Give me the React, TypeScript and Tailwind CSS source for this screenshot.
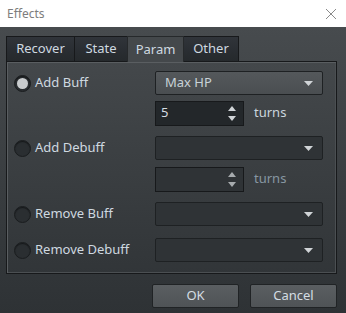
import React from "react";

const font = { fontFamily: '"Noto Sans", "Open Sans", sans-serif' };

function Radio({ checked }: { checked?: boolean }) {
  return (
    <div className="w-[17px] h-[17px] rounded-full border border-[#1a1d1f] bg-[#2a2e31] flex items-center justify-center shrink-0 shadow-[inset_0_1px_1px_rgba(0,0,0,0.5)]">
      {checked && <div className="w-[11px] h-[11px] rounded-full bg-[#c9ccce]" />}
    </div>
  );
}

function Arrow({ color = "#d0d4d7" }: { color?: string }) {
  return (
    <svg width="9" height="5" viewBox="0 0 9 5" className="shrink-0">
      <path d="M0 0 L9 0 L4.5 5 Z" fill={color} />
    </svg>
  );
}

function Combo({ value, active }: { value?: string; active?: boolean }) {
  return (
    <div
      className={
        "w-[168px] h-[24px] rounded-[2px] border flex items-center pl-[9px] pr-[9px] justify-between " +
        (active
          ? "border-[#1e2123] bg-gradient-to-b from-[#54585b] to-[#4a4e51] text-[#c8d2d8]"
          : "border-[#1e2123] bg-[#2f3336]")
      }
    >
      <span className="text-[13px]">{value ?? ""}</span>
      <Arrow />
    </div>
  );
}

function Spin({ value, disabled }: { value?: string; disabled?: boolean }) {
  return (
    <div className="flex items-center">
      <div
        className={
          "w-[89px] h-[25px] border border-[#17191b] flex items-center justify-between pl-[5px] pr-[7px] " +
          (disabled ? "bg-[#2f3336]" : "bg-[#23272a]")
        }
      >
        <span className="text-[13px] text-[#d6dde2]">{value ?? ""}</span>
        <div className="flex flex-col gap-[5px] items-center">
          <svg width="8" height="5" viewBox="0 0 8 5">
            <path d="M0 5 L8 5 L4 0 Z" fill={disabled ? "#a7abae" : "#d0d4d7"} />
          </svg>
          <svg width="8" height="5" viewBox="0 0 8 5">
            <path d="M0 0 L8 0 L4 5 Z" fill={disabled ? "#a7abae" : "#d0d4d7"} />
          </svg>
        </div>
      </div>
      <span className={"ml-[10px] text-[13px] " + (disabled ? "text-[#8797a2]" : "text-[#cbd6dd]")}>turns</span>
    </div>
  );
}

function Row({ label, checked, children }: { label?: string; checked?: boolean; children: React.ReactNode }) {
  return (
    <div className="flex items-center h-[24px]">
      <div className="w-[148px] flex items-center pl-[7px] gap-[4px]">
        {label && (
          <>
            <Radio checked={checked} />
            <span className="text-[13px] text-[#cfd9e0]">{label}</span>
          </>
        )}
      </div>
      {children}
    </div>
  );
}

export default function App() {
  const tabs = ["Recover", "State", "Param", "Other"];
  const widths = ["w-[69px]", "w-[54px]", "w-[57px]", "w-[56px]"];
  return (
    <div className="w-[346px] h-[313px] flex flex-col overflow-hidden" style={font}>
      <div className="h-[27px] bg-white flex items-center justify-between pl-[7px] pr-[9px] shrink-0">
        <span className="text-[12px] text-[#7d7d7d]">Effects</span>
        <svg width="12" height="12" viewBox="0 0 12 12">
          <path d="M1 1 L11 11 M11 1 L1 11" stroke="#8a8a8a" strokeWidth="1" />
        </svg>
      </div>
      <div className="flex-1 bg-gradient-to-b from-[#474b4e] to-[#2e3235] px-[6px] pt-[9px] flex flex-col">
        <div className="flex h-[25px] items-end">
          {tabs.map((t, i) => {
            const active = t === "Param";
            return (
              <div
                key={t}
                className={
                  widths[i] +
                  " h-[25px] flex items-center justify-center text-[13px] border border-b-0 -ml-px first:ml-0 " +
                  (active
                    ? "bg-[#44484b] border-[#26292b] text-[#cfd9e0] relative z-10 h-[26px] -mb-px"
                    : "bg-gradient-to-b from-[#30343a] to-[#25292c] border-[#17191b] text-[#cfd9e0]")
                }
              >
                {t}
              </div>
            );
          })}
        </div>
        <div className="w-[331px] h-[213px] border border-[#17191b] shadow-[inset_1px_1px_0_#5a5e61,inset_-1px_-1px_0_#4b4f52] flex flex-col pt-[9px]">
          <Row label="Add Buff" checked>
            <Combo value="Max HP" active />
          </Row>
          <div className="mt-[6px]">
            <Row>
              <Spin value="5" />
            </Row>
          </div>
          <div className="mt-[11px]">
            <Row label="Add Debuff">
              <Combo />
            </Row>
          </div>
          <div className="mt-[7px]">
            <Row>
              <Spin disabled />
            </Row>
          </div>
          <div className="mt-[11px]">
            <Row label="Remove Buff">
              <Combo />
            </Row>
          </div>
          <div className="mt-[12px]">
            <Row label="Remove Debuff">
              <Combo />
            </Row>
          </div>
        </div>
        <div className="flex justify-end gap-[11px] mt-[10px] pr-[3px]">
          <div className="w-[87px] h-[24px] rounded-[2px] border border-[#202325] bg-gradient-to-b from-[#5a5e61] to-[#4f5356] flex items-center justify-center text-[13px] text-[#d4dde3]">
            OK
          </div>
          <div className="w-[87px] h-[24px] rounded-[2px] border border-[#202325] bg-gradient-to-b from-[#5a5e61] to-[#4f5356] flex items-center justify-center text-[13px] text-[#d4dde3]">
            Cancel
          </div>
        </div>
      </div>
    </div>
  );
}
